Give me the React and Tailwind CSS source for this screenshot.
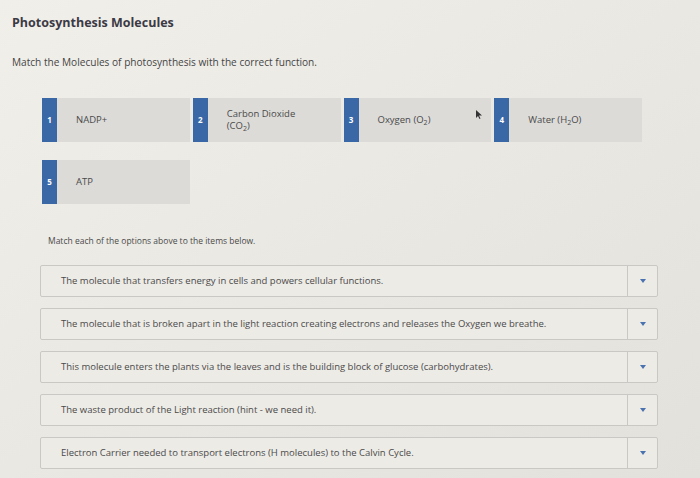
import React from 'react';

const molecules = [
  { n: 1, label: <>NADP+</> },
  { n: 2, label: <>Carbon Dioxide<br />(CO<sub className="text-[7px]">2</sub>)</> },
  { n: 3, label: <>Oxygen (O<sub className="text-[7px]">2</sub>)</> },
  { n: 4, label: <>Water (H<sub className="text-[7px]">2</sub>O)</> },
  { n: 5, label: <>ATP</> },
];

const prompts = [
  'The molecule that transfers energy in cells and powers cellular functions.',
  'The molecule that is broken apart in the light reaction creating electrons and releases the Oxygen we breathe.',
  'This molecule enters the plants via the leaves and is the building block of glucose (carbohydrates).',
  'The waste product of the Light reaction (hint - we need it).',
  'Electron Carrier needed to transport electrons (H molecules) to the Calvin Cycle.',
];

function MoleculeCard({ n, label }) {
  return (
    <div className="flex h-[44px] bg-[#dcdbd8]">
      <div className="w-[15px] bg-[#3a68a6] flex items-center justify-center text-white text-[8px] font-bold">
        {n}
      </div>
      <div className="flex items-center pl-[19px] text-[9.5px] leading-[12px] text-[#4a4a4a]">
        <span>{label}</span>
      </div>
    </div>
  );
}

function MatchRow({ text }) {
  return (
    <div className="flex h-[32px] border border-[#c9c8c4] rounded-[2px] bg-[#edebe6]">
      <div className="flex-1 flex items-center pl-[20px] text-[9.5px] text-[#4a4a4a]">{text}</div>
      <div className="w-[30px] border-l border-[#c9c8c4] flex items-center justify-center">
        <svg width="6" height="4" viewBox="0 0 6 4"><path d="M0 0h6L3 4z" fill="#4a72b0" /></svg>
      </div>
    </div>
  );
}

export default function App() {
  return (
    <div
      className="relative w-[700px] h-[478px] overflow-hidden bg-gradient-to-br from-[#f1efea] via-[#eae8e3] to-[#e3e1dc] px-[12px] pt-[14px]"
      style={{ fontFamily: '"Open Sans", Lato, sans-serif' }}
    >
      <h1 className="text-[12.5px] font-bold text-[#3b3a45]">Photosynthesis Molecules</h1>
      <p className="mt-[22px] text-[10.1px] text-[#454545]">Match the Molecules of photosynthesis with the correct function.</p>

      <div className="ml-[30px] mt-[28px] w-[600px] grid grid-cols-4 gap-x-[3px] gap-y-[18px]">
        {molecules.map((m) => (
          <MoleculeCard key={m.n} {...m} />
        ))}
      </div>

      <p className="ml-[36px] mt-[31px] text-[8.5px] text-[#4a4a4a]">Match each of the options above to the items below.</p>

      <div className="ml-[28px] mt-[17px] w-[618px] flex flex-col gap-[11px]">
        {prompts.map((p, i) => (
          <MatchRow key={i} text={p} />
        ))}
      </div>

      <svg className="absolute left-[476px] top-[110px]" width="7" height="10" viewBox="0 0 7 10">
        <path d="M0 0v8l2-2 1.5 3 1-.5L3 5.5h3z" fill="#333" />
      </svg>
    </div>
  );
}
